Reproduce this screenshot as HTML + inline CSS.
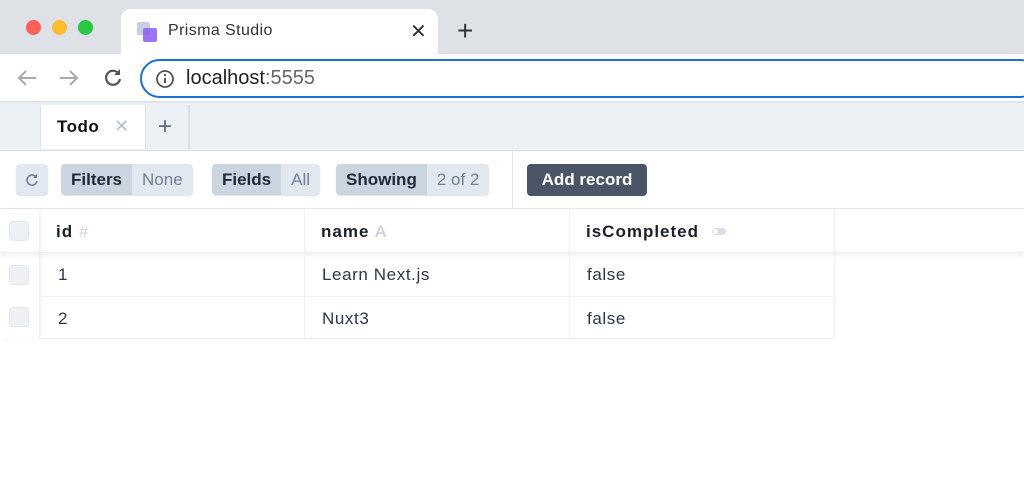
<!DOCTYPE html>
<html><head><style>
*{box-sizing:border-box;margin:0;padding:0}
body{width:1024px;height:478px;overflow:hidden;background:#fff;font-family:"Liberation Sans",sans-serif;position:relative}
.a{position:absolute}
.btn{position:absolute;top:164px;height:31px;border-radius:4px;display:flex;overflow:hidden;font-size:17px;box-shadow:0 1px 1px rgba(0,0,0,.12)}
.btn .l{background:#cbd5df;color:#1f2937;font-weight:bold;padding:0 10px;line-height:31px}
.btn .r{background:#e2e8f0;color:#718096;padding:0 10px;line-height:31px}
.cell{position:absolute;font-size:17px;color:#2d3748;letter-spacing:.6px}
.hd{letter-spacing:1px}
</style></head><body>
<div class="a" style="left:0;top:0;width:1024px;height:54px;background:#dee1e6"></div>
<div class="a" style="left:26px;top:20px;width:15px;height:15px;border-radius:50%;background:#fe5f57"></div>
<div class="a" style="left:52px;top:20px;width:15px;height:15px;border-radius:50%;background:#febc2e"></div>
<div class="a" style="left:78px;top:20px;width:15px;height:15px;border-radius:50%;background:#28c840"></div>
<div class="a" style="left:121px;top:9px;width:317px;height:46px;background:#fff;border-radius:10px 10px 0 0"></div>
<div class="a" style="left:137px;top:22px;width:13px;height:13px;background:#c9cfe0;border-radius:2px"></div>
<div class="a" style="left:143px;top:28px;width:14px;height:14px;background:#8b5cf6;opacity:.85;border-radius:2px"></div>
<div class="a" style="left:168px;top:22px;font-size:16px;color:#333;letter-spacing:.4px">Prisma Studio</div>
<div class="a" style="left:410px;top:19px;font-size:20px;color:#333">✕</div>
<div class="a" style="left:457px;top:15px;font-size:28px;color:#333">+</div>
<div class="a" style="left:0;top:54px;width:1024px;height:48px;background:#fff"></div>
<svg class="a" style="left:14px;top:66px" width="26" height="24" viewBox="0 0 26 24"><path d="M22 12H5M12 5l-7 7 7 7" stroke="#aaa" stroke-width="2" fill="none"/></svg>
<svg class="a" style="left:56px;top:66px" width="26" height="24" viewBox="0 0 26 24"><path d="M4 12h17M14 5l7 7-7 7" stroke="#aaa" stroke-width="2" fill="none"/></svg>
<svg class="a" style="left:101px;top:66px" width="24" height="24" viewBox="0 0 24 24"><path d="M18 8A7 7 0 1 0 19 13" stroke="#555" stroke-width="2.2" fill="none"/><path d="M19 3v6h-6z" fill="#555"/></svg>
<div class="a" style="left:140px;top:59px;width:900px;height:39px;border:2px solid #1a6fd8;border-radius:20px"></div>
<svg class="a" style="left:155px;top:69px" width="20" height="20" viewBox="0 0 20 20"><circle cx="10" cy="10" r="8" stroke="#555" stroke-width="1.8" fill="none"/><path d="M10 9v5" stroke="#555" stroke-width="2"/><circle cx="10" cy="6" r="1.2" fill="#555"/></svg>
<div class="a" style="left:186px;top:67px;font-size:20px;color:#222">localhost<span style="color:#666">:5555</span></div>
<div class="a" style="left:0;top:101px;width:1024px;height:50px;background:#ecf1f6;border-top:2px solid #dfe4ea;border-bottom:1px solid #d8dfe6"></div>
<div class="a" style="left:40px;top:105px;width:105px;height:44px;background:#fff;border-left:1px solid #dbe2ea"></div>
<div class="a" style="left:57px;top:117px;font-size:17px;font-weight:bold;color:#111;letter-spacing:.5px">Todo</div>
<div class="a" style="left:114px;top:116px;font-size:18px;color:#b8c2cc">✕</div>
<div class="a" style="left:158px;top:113px;font-size:24px;color:#5a6b7f">+</div>
<div class="a" style="left:145px;top:105px;width:1px;height:44px;background:#d8dfe6"></div>
<div class="a" style="left:188px;top:105px;width:2px;height:44px;background:#d8dfe6"></div>
<div class="a" style="left:16px;top:164px;width:32px;height:31px;background:#e2e8f0;border-radius:4px;box-shadow:0 1px 1px rgba(0,0,0,.12)"></div>
<svg class="a" style="left:24px;top:172px" width="16" height="16" viewBox="0 0 16 16"><path d="M12 5A5 5 0 1 0 13 9" stroke="#718096" stroke-width="1.6" fill="none"/><path d="M13 2v4h-4z" fill="#718096"/></svg>
<div class="btn" style="left:61px"><div class="l">Filters</div><div class="r">None</div></div>
<div class="btn" style="left:212px"><div class="l">Fields</div><div class="r">All</div></div>
<div class="btn" style="left:336px"><div class="l">Showing</div><div class="r">2 of 2</div></div>
<div class="a" style="left:512px;top:151px;width:1px;height:58px;background:#e2e8f0"></div>
<div class="a" style="left:527px;top:164px;width:120px;height:32px;background:#4a5568;border-radius:4px;color:#fff;font-weight:bold;font-size:17px;line-height:32px;text-align:center">Add record</div>
<div class="a" style="left:0;top:208px;width:1024px;height:1px;background:#e2e8f0"></div>
<div class="a" style="left:0;top:209px;width:1024px;height:44px;box-shadow:0 3px 4px rgba(0,0,0,.05);border-bottom:1px solid #edf0f4"></div>
<div class="a" style="left:0;top:209px;width:39px;height:130px;box-shadow:2px 0 3px rgba(0,0,0,.06)"></div>
<div class="a" style="left:304px;top:209px;width:1px;height:129px;background:#edf0f4"></div>
<div class="a" style="left:569px;top:209px;width:1px;height:129px;background:#edf0f4"></div>
<div class="a" style="left:834px;top:209px;width:1px;height:129px;background:#edf0f4"></div>
<div class="a" style="left:39px;top:296px;width:795px;height:1px;background:#edf0f4"></div>
<div class="a" style="left:39px;top:338px;width:795px;height:1px;background:#edf0f4"></div>
<div class="a" style="left:9px;top:221px;width:20px;height:20px;border-radius:4px;background:#edf1f5;border:1px solid #e2e8f0"></div>
<div class="a" style="left:9px;top:265px;width:20px;height:20px;border-radius:4px;background:#edf1f5;border:1px solid #e2e8f0"></div>
<div class="a" style="left:9px;top:307px;width:20px;height:20px;border-radius:4px;background:#edf1f5;border:1px solid #e2e8f0"></div>
<div class="cell hd" style="left:56px;top:222px;font-weight:bold;color:#1a202c">id <span style="color:#cbd5e0;font-weight:normal">#</span></div>
<div class="cell hd" style="left:321px;top:222px;font-weight:bold;color:#1a202c">name <span style="color:#cbd5e0">A</span></div>
<div class="cell hd" style="left:586px;top:222px;font-weight:bold;color:#1a202c">isCompleted</div>
<div class="a" style="left:712px;top:228px;width:14px;height:7px;border-radius:4px;background:#d5dde6"></div>
<div class="a" style="left:713px;top:229px;width:5px;height:5px;border-radius:50%;background:#fff"></div>
<div class="cell" style="left:58px;top:265px">1</div>
<div class="cell" style="left:322px;top:265px">Learn Next.js</div>
<div class="cell" style="left:587px;top:265px">false</div>
<div class="cell" style="left:58px;top:309px">2</div>
<div class="cell" style="left:322px;top:309px">Nuxt3</div>
<div class="cell" style="left:587px;top:309px">false</div>
</body></html>
